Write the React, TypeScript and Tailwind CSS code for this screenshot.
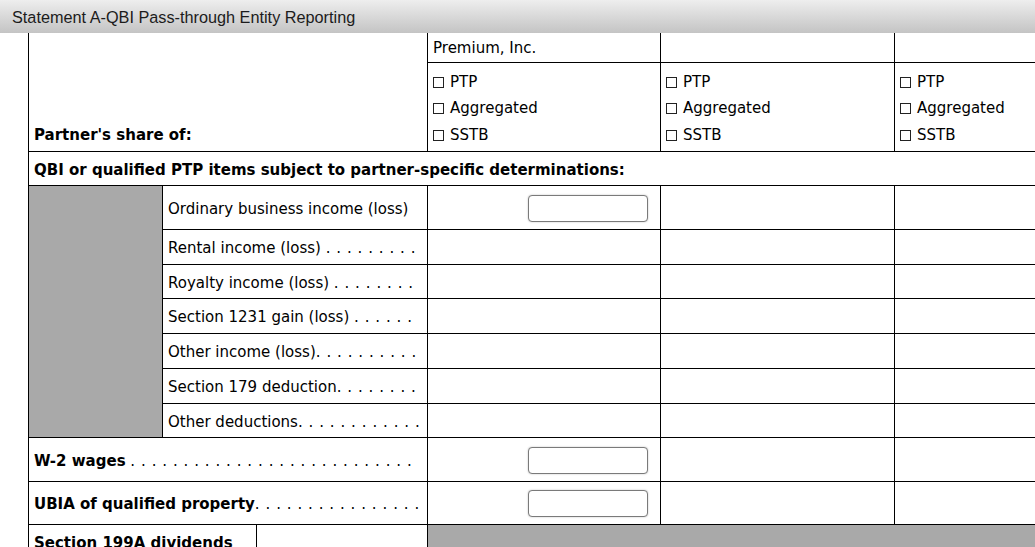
import React from "react"

const dots = (n: number) => Array(n).fill(".").join(" ")

function Leader({ n }: { n: number }) {
  return <span className="font-normal tracking-[0.55px]">{dots(n)}</span>
}

function Box() {
  return <span className="inline-block w-[11px] h-[11px] border border-[#222] mr-[6px] align-[-1px]" />
}

function Checks() {
  return (
    <div className="flex flex-col">
      {["PTP", "Aggregated", "SSTB"].map((label) => (
        <div key={label} className="h-[26.5px] leading-[26.5px] whitespace-nowrap">
          <Box />
          {label}
        </div>
      ))}
    </div>
  )
}

function Amount() {
  return (
    <div className="flex justify-end pr-[7px] -mt-[2px]">
      <input
        type="text"
        className="w-[120px] h-[27px] rounded-[4px] border border-[#7a7a7a] bg-white shadow-[0_0_2px_rgba(0,0,0,0.25)] outline-none"
      />
    </div>
  )
}

const line = "border border-black px-[5px]"
const cell = `${line} align-middle pt-[4px]`

const itemRows = [
  { text: "Ordinary business income (loss)", n: 0, h: "h-[44px]", input: true },
  { text: "Rental income (loss) ", n: 9, h: "h-[35px]" },
  { text: "Royalty income (loss) ", n: 8, h: "h-[34px]" },
  { text: "Section 1231 gain (loss) ", n: 6, h: "h-[35px]" },
  { text: "Other income (loss)", n: 10, h: "h-[35px]" },
  { text: "Section 179 deduction", n: 8, h: "h-[35px]" },
  { text: "Other deductions", n: 12, h: "h-[34px]" },
]

export default function App() {
  return (
    <div className="h-screen w-full overflow-hidden bg-white text-black font-['DejaVu_Sans',Verdana,sans-serif] text-[15px]">
      {/* Title bar */}
      <div className="h-[33px] bg-linear-to-b from-[#eeeeee] to-[#c4c4c4] flex items-center pl-[12px] pt-[1px] font-['Liberation_Sans',Arial,sans-serif] text-[16.25px] text-[#1c1c1c]">
        Statement A-QBI Pass-through Entity Reporting
      </div>

      <div className="pl-[28px]">
        <table className="table-fixed border-collapse w-[1101px]">
          <colgroup>
            <col className="w-[134px]" />
            <col className="w-[94px]" />
            <col className="w-[171px]" />
            <col className="w-[233px]" />
            <col className="w-[234px]" />
            <col className="w-[235px]" />
          </colgroup>
          <tbody>
            <tr className="h-[29px]">
              <td colSpan={3} rowSpan={2} className={`${line} border-t-0 align-bottom pb-[4px] font-bold`}>
                Partner's share of:
              </td>
              <td className={`${line} border-t-0 align-middle pt-[2px]`}>Premium, Inc.</td>
              <td className={`${line} border-t-0`} />
              <td className={`${line} border-t-0`} />
            </tr>
            <tr className="h-[89px]">
              <td className={cell}><Checks /></td>
              <td className={cell}><Checks /></td>
              <td className={cell}><Checks /></td>
            </tr>
            <tr className="h-[34px]">
              <td colSpan={6} className={`${cell} font-bold`}>
                QBI or qualified PTP items subject to partner-specific determinations:
              </td>
            </tr>
            {itemRows.map((row, i) => (
              <tr key={row.text} className={row.h}>
                {i === 0 && <td rowSpan={7} className={`${line} bg-[#a9a9a9]`} />}
                <td colSpan={2} className={`${cell} whitespace-nowrap`}>
                  {row.text}
                  {row.n > 0 && <Leader n={row.n} />}
                </td>
                <td className={cell}>{row.input && <Amount />}</td>
                <td className={cell} />
                <td className={cell} />
              </tr>
            ))}
            <tr className="h-[44px]">
              <td colSpan={3} className={`${cell} whitespace-nowrap`}>
                <span className="font-bold">W-2 wages</span> <Leader n={27} />
              </td>
              <td className={cell}><Amount /></td>
              <td className={cell} />
              <td className={cell} />
            </tr>
            <tr className="h-[43px]">
              <td colSpan={3} className={`${cell} whitespace-nowrap`}>
                <span className="font-bold">UBIA of qualified property</span>
                <Leader n={16} />
              </td>
              <td className={cell}><Amount /></td>
              <td className={cell} />
              <td className={cell} />
            </tr>
            <tr className="h-[60px]">
              <td colSpan={2} className={`${line} align-top pt-[7px] font-bold`}>
                Section 199A dividends
              </td>
              <td className={line} />
              <td colSpan={3} className={`${line} bg-[#a9a9a9]`} />
            </tr>
          </tbody>
        </table>
      </div>
    </div>
  )
}
